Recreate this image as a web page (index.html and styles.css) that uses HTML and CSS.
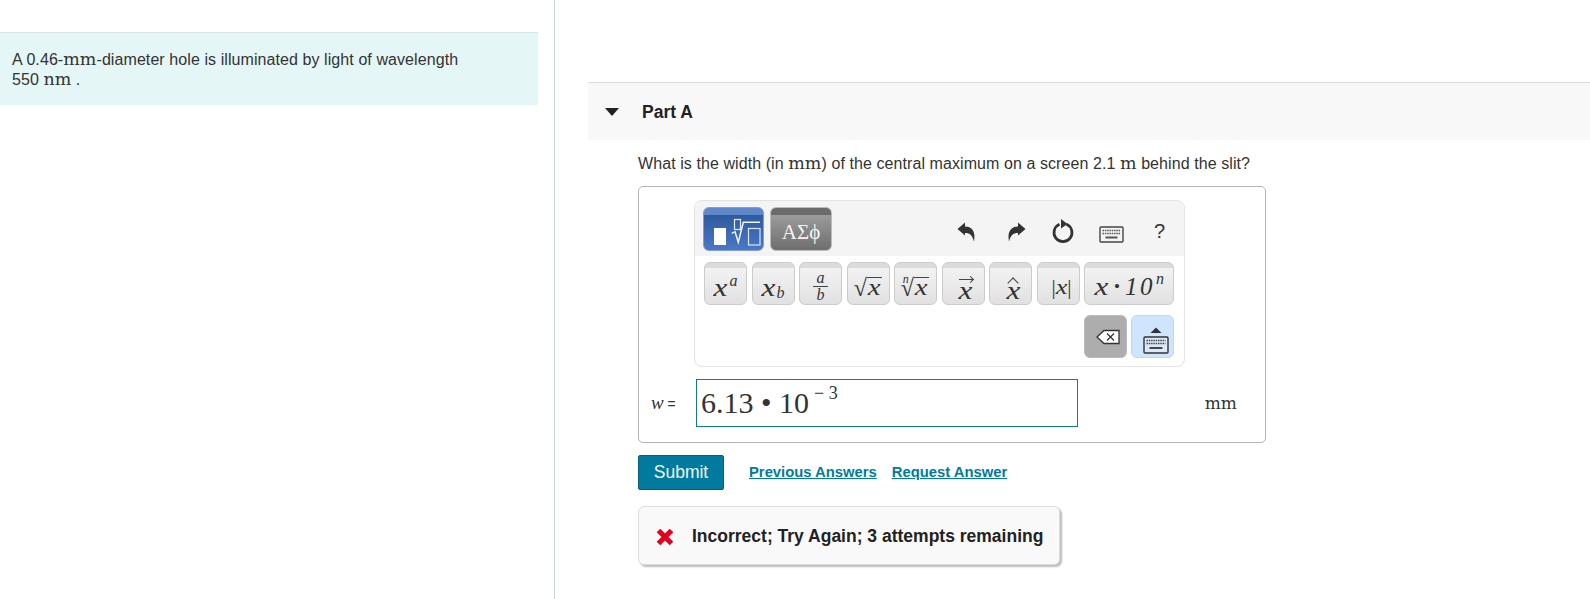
FILE: index.html
```html
<!DOCTYPE html>
<html lang="en">
<head>
<meta charset="utf-8">
<title>Part A</title>
<link rel="stylesheet" href="styles.css">
</head>
<body>
<div class="page">
  <aside class="left">
    <div class="statement">A 0.46-<span class="mathrm">mm</span>-diameter hole is illuminated by light of wavelength<br>550 <span class="mathrm">nm</span> .</div>
  </aside>
  <main class="right">
    <div class="part-header">
      <span class="caret"></span>
      <span class="part-title">Part A</span>
    </div>
    <div class="part-body">
      <p class="question">What is the width (in <span class="mathrm">mm</span>) of the central maximum on a screen 2.1 <span class="mathrm">m</span> behind the slit?</p>
      <div class="mathbox">
        <div class="toolbar">
          <div class="toolbar-top">
            <div class="palette palette-blue">
              <svg width="61" height="43" viewBox="0 0 61 43"><rect x="11" y="21" width="12" height="17" fill="#fff"/><rect x="31.500" y="12.500" width="6" height="10" fill="none" stroke="#e3edfa" stroke-width="1.200"/><path d="M28.700 26.300 32 24.700 35.300 35.300 40.300 15.300H57" fill="none" stroke="#f2f6fc" stroke-width="1.500"/><rect x="45.500" y="21.500" width="11.500" height="16.500" fill="none" stroke="#dbe7f7" stroke-width="1.200"/></svg>
            </div>
            <div class="palette palette-grey">ΑΣϕ</div>
            <div class="tools">
              <svg class="tool tool-undo" width="19" height="20" viewBox="0 0 19 20"><path d="M.5 7 8 .5V4.500C14.500 4.500 19 9 17 19.500 15.500 13.500 13 11 8 11V13.500Z" fill="#333"/></svg>
              <svg class="tool tool-redo" width="19" height="20" viewBox="0 0 19 20"><path d="M18.500 7 11 .5V4.500C4.500 4.500 0 9 2 19.500 3.500 13.500 6 11 11 11V13.500Z" fill="#333"/></svg>
              <svg class="tool tool-reset" width="24" height="26" viewBox="0 0 24 26"><path d="M8.500 6.300A9 9 0 1 0 15.500 6.300" fill="none" stroke="#333" stroke-width="2.700"/><path d="M10 1 16.500 6 10 10.500Z" fill="#333"/></svg>
              <svg class="tool tool-keys" width="25" height="17" viewBox="0 0 25 17"><rect x="1" y="1" width="23" height="15" rx="1" fill="#f4f4f4" stroke="#444" stroke-width="1.400"/><path d="M3.500 4.500H21.500M3.500 7.500H21.500" stroke="#555" stroke-width="1.600" stroke-dasharray="1.500 .8"/><path d="M6.500 11.500H18.500" stroke="#555" stroke-width="2"/></svg>
              <span class="tool tool-help">?</span>
            </div>
          </div>
          <div class="toolbar-row">
            <button class="key key-low"><i class="wide">x</i><sup>a</sup></button>
            <button class="key key-low"><i class="wide">x</i><sub>b</sub></button>
            <button class="key"><span class="frac"><i>a</i><i class="den">b</i></span></button>
            <button class="key key-low"><span class="root">√</span><i class="radicand"><i class="wide">x</i></i></button>
            <button class="key key-low"><sup class="index">n</sup><span class="root">√</span><i class="radicand"><i class="wide">x</i></i></button>
            <button class="key key-low"><span class="accent"><span class="mark mark-arrow"></span><i class="wide">x</i></span></button>
            <button class="key key-low"><span class="accent"><span class="mark mark-hat"></span><i class="wide">x</i></span></button>
            <button class="key key-low key-abs">|<i class="wide">x</i>|</button>
            <button class="key key-wide"><i class="wide">x</i><span class="dot">•</span><i class="ten">10</i><sup>n</sup></button>
          </div>
          <div class="toolbar-row toolbar-row-end">
            <button class="key key-del">
              <svg width="24" height="16" viewBox="0 0 24 16"><path d="M1 8 8 1.500H23V14.500H8Z" fill="#fff" stroke="#333" stroke-width="1.300"/><path d="M11 4.500 18 11.500M18 4.500 11 11.500" stroke="#333" stroke-width="1.300"/></svg>
            </button>
            <button class="key key-kbd">
              <svg width="26" height="30" viewBox="0 0 26 30"><path d="M7.500 7 13 1.500 18.500 7Z" fill="#333"/><rect x="1" y="11" width="24" height="16" rx="1" fill="#dce8f5" stroke="#333" stroke-width="1.400"/><path d="M3.500 14.500H22.500M3.500 17.500H22.500" stroke="#445" stroke-width="1.600" stroke-dasharray="1.500 .8"/><path d="M6.500 22H19.500" stroke="#445" stroke-width="2"/></svg>
            </button>
          </div>
        </div>
        <div class="answer-row">
          <span class="answer-label"><i class="w">w</i> =</span>
          <div class="answer-input">6.13 • 10<sup>− 3</sup></div>
          <span class="unit">mm</span>
        </div>
      </div>
      <div class="actions">
        <button class="submit">Submit</button>
        <a class="link link-first" href="#">Previous Answers</a>
        <a class="link" href="#">Request Answer</a>
      </div>
      <div class="feedback">
        <svg width="18" height="18" viewBox="0 0 18 18"><path d="M2.500 2.500 15.500 15.500M15.500 2.500 2.500 15.500" stroke="#e2001a" stroke-width="5"/></svg>
        <span>Incorrect; Try Again; 3 attempts remaining</span>
      </div>
    </div>
  </main>
</div>
</body>
</html>
```
FILE: styles.css
```css
* { box-sizing: border-box; }
html, body { margin: 0; padding: 0; background: #fff; }
body { font-family: "Liberation Sans", Arial, sans-serif; font-size: 16px; color: #333; }
.page { display: flex; height: 599px; overflow: hidden; }
.left { flex: 0 0 555px; border-right: 1px solid #c6d4df; padding-top: 32px; }
.statement {
  width: 538px; height: 73px; padding: 17px 0 0 12px;
  background: #e5f6f7; border-top: 1px solid #d6e2e5;
  line-height: 20px; color: #333; letter-spacing: .08px;
}
.mathrm { font-family: "DejaVu Serif", serif; font-size: 17.500px; letter-spacing: 0; line-height: 1; }
.right { flex: 1; padding: 82px 0 0 33px; }
.part-header {
  height: 58px; padding-top: 1px; display: flex; align-items: center;
  background: #f8f8f8; border-top: 1px solid #ddd;
}
.caret {
  width: 0; height: 0; margin-left: 17px;
  border-left: 7px solid transparent; border-right: 7px solid transparent;
  border-top: 8px solid #222;
}
.part-title { margin-left: 23px; font-weight: 700; font-size: 17.500px; color: #222; }
.part-body { padding-left: 50px; width: 678px; }
.question { margin: 14px 0 0; line-height: 20px; height: 32px; letter-spacing: .08px; }
.mathbox {
  width: 628px; height: 257px; padding: 13px 0 0 55px;
  border: 1px solid #b5b5b5; border-radius: 5px;
}
.toolbar {
  width: 491px; height: 167px; padding-bottom: 10px; background: #fff;
  border: 1px solid #e3e3e3; border-radius: 8px;
}
.toolbar-top {
  display: flex; align-items: flex-start; height: 55px; padding: 6px 0 0 8px;
  background: #f4f4f4; border-radius: 7px 7px 0 0;
}
.palette { width: 61px; height: 44px; border: 1px solid #bbb; border-radius: 6px; overflow: hidden; }
.palette svg { display: block; margin: -1px; }
.palette-blue { background: linear-gradient(#5f87cc 0 7px, #2f5a9f 7px, #4a78c4); border-color: #7f9fd0; }
.palette-grey {
  width: 62px; margin-left: 6px; display: flex; align-items: center; justify-content: center; padding-top: 6px;
  background: linear-gradient(#6b6b6b 0 7px, #9b9b9b 7px, #6e6e6e);
  font-family: "Liberation Serif", serif; font-size: 21px; color: #f4f4f4;
}
.tools { flex: 1; height: 48px; display: flex; align-items: center; padding-left: 125px; padding-top: 2px; }
.tool { flex: none; color: #333; }
.tool-redo { margin-left: 31px; }
.tool-reset { margin-left: 25px; margin-top: -2px; }
.tool-keys { margin-left: 24px; margin-top: 5px; }
.tool-help { margin-left: 30px; font-size: 20px; line-height: 26px; margin-top: -2px; }
.toolbar-row { display: flex; gap: 4.500px; padding: 6px 0 0 9px; }
.toolbar-row-end { justify-content: flex-end; padding: 10px 10px 0 0; }
.key {
  flex: none; width: 43px; height: 43px; padding: 5px 0 0; margin: 0;
  display: flex; align-items: center; justify-content: center;
  border: 1px solid #ccc; border-radius: 6px;
  background: linear-gradient(#dcdcdc 0 5px, #f2f2f2 5px, #e1e1e1);
  font-family: "Liberation Serif", serif; font-size: 25px; color: #333; line-height: 1;
}
.wide { display: inline-block; transform: scaleX(1.25); margin: 0 2px; }
.key sup { font-size: 16px; font-style: italic; position: relative; top: -7px; vertical-align: baseline; margin-left: 1px; }
.key sub { font-size: 16px; font-style: italic; position: relative; top: 5px; vertical-align: baseline; }
.key-low { padding-top: 8px; }
.frac { display: flex; flex-direction: column; align-items: center; font-size: 16px; width: 15px; line-height: 16px; }
.den { border-top: 1px solid #444; width: 100%; text-align: center; }
.root { font-size: 24px; }
.radicand { border-top: 1px solid #444; line-height: 20px; padding: 0 1px 0 0; font-size: 23px; }
.key .index { font-size: 12px; margin-right: -8px; top: -9px; }
.accent { display: flex; flex-direction: column; align-items: center; line-height: 16px; margin-left: 6px; }
.mark { display: block; width: 14px; height: 6px; }
.mark-arrow { background: linear-gradient(#444,#444) center 2px / 14px 1px no-repeat; position: relative; }
.mark-arrow::after {
  content: ""; position: absolute; right: 0; top: 0; width: 4px; height: 4px;
  border-top: 1px solid #444; border-right: 1px solid #444; transform: rotate(45deg);
}
.mark-hat { position: relative; }
.mark-hat::after {
  content: ""; position: absolute; left: 3px; top: 2px; width: 7px; height: 7px;
  border-top: 1px solid #444; border-left: 1px solid #444; transform: rotate(45deg);
}
.key-abs { font-size: 21px; padding-left: 7px; }
.key-abs .wide { margin: 0 1px; }
.key-wide { width: 90px; font-size: 25px; padding-top: 5px; }
.key-wide .ten { letter-spacing: 2.500px; }
.dot { font-size: 17px; margin: 0 5px; }
.key-del { background: #adadad; border-color: #bbb; padding: 0 0 0 6px; }
.key-kbd { background: #cfe5fd; border-color: #c5d5e5; padding: 8px 0 0 6px; }
.answer-row { display: flex; align-items: center; height: 48px; margin: 12px 0 0 -43px; }
.answer-label { width: 45px; font-family: "Liberation Sans", Arial, sans-serif; font-size: 14px; }
.w { font-family: "Liberation Serif", serif; font-size: 19px; }
.answer-input {
  width: 382px; height: 48px; padding: 2px 0 0 4px;
  border: 1px solid #0d7a98;
  font-family: "Liberation Serif", serif; font-size: 30px; color: #333; line-height: 42px;
}
.answer-input sup { font-size: 18px; line-height: 0; position: relative; top: -3px; vertical-align: super; margin-left: 5px; }
.unit { margin-left: auto; margin-right: 28px; font-family: "DejaVu Serif", serif; font-size: 17px; }
.actions { display: flex; align-items: center; margin-top: 12px; height: 35px; }
.submit {
  width: 86px; height: 35px; padding: 0 0 1px; border: 1px solid #05617c; border-radius: 2px;
  background: #007b9f; color: #f2f8fa; font-family: "Liberation Sans", Arial, sans-serif; font-size: 17.500px;
}
.link { color: #007b9f; font-weight: 700; font-size: 14.800px; text-decoration: underline; margin: 0 0 2px 15px; }
.link-first { margin-left: 25px; }
.feedback {
  display: flex; align-items: center; width: 422px; height: 59px; margin-top: 16px; padding: 2px 0 0 17px; gap: 18px;
  background: #f9f9f9; border: 1px solid #ddd; border-radius: 6px;
  box-shadow: 2px 2px 2px #bbb;
  font-weight: 700; font-size: 17.500px; color: #222;
}
```
